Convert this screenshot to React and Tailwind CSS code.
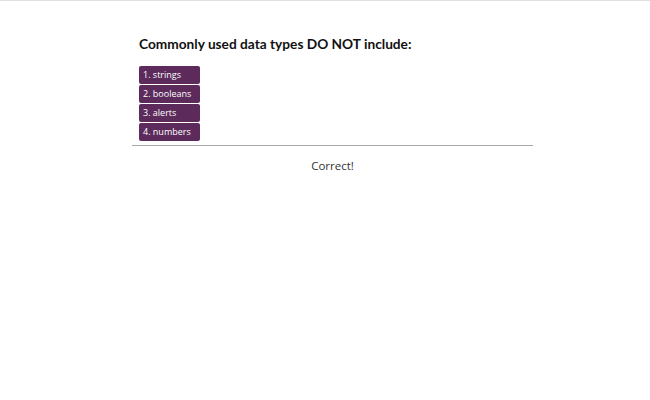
const answers = ['1. strings', '2. booleans', '3. alerts', '4. numbers'];

export default function App() {
  return (
    <div className="min-h-[400px] bg-white border-t border-[#e0e0e0] font-['Open_Sans',sans-serif]">
      <div className="pl-[132px] pt-[33px]">
        <div className="w-[401px]">
          <div className="pl-[7px]">
            <h2 className="font-['Lato',sans-serif] text-[13.7px] font-bold text-[#111] leading-[20px]">
              Commonly used data types DO NOT include:
            </h2>
            <div className="mt-[12px] flex flex-col gap-[1.5px]">
              {answers.map((a) => (
                <button
                  key={a}
                  className="w-[61px] h-[17.5px] bg-[#5c2b5c] text-white text-[9px] text-left pl-[4px] rounded-[2px] leading-[17px] whitespace-nowrap"
                >
                  {a}
                </button>
              ))}
            </div>
          </div>
          <hr className="mt-[4px] border-t border-[#a8a8a8]" />
          <p className="mt-[11px] text-center text-[11.5px] text-[#333]">Correct!</p>
        </div>
      </div>
    </div>
  );
}
